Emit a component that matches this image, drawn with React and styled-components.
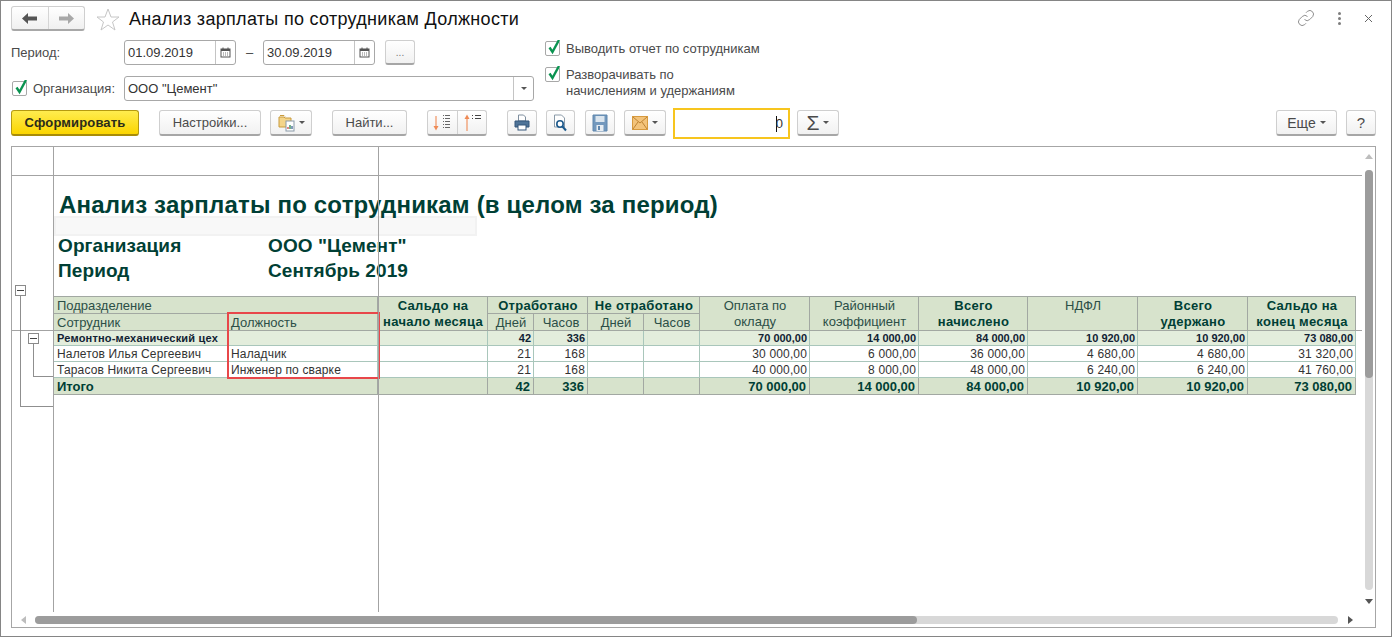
import React from "react";
import styled, { createGlobalStyle } from "styled-components";

const totalRow = ["42", "336", "", "", "70 000,00", "14 000,00", "84 000,00", "10 920,00", "10 920,00", "73 080,00"];
const people = [
  { name: "Налетов Илья Сергеевич", job: "Наладчик", cells: ["21", "168", "", "", "30 000,00", "6 000,00", "36 000,00", "4 680,00", "4 680,00", "31 320,00"] },
  { name: "Тарасов Никита Сергеевич", job: "Инженер по сварке", cells: ["21", "168", "", "", "40 000,00", "8 000,00", "48 000,00", "6 240,00", "6 240,00", "41 760,00"] },
];
const colWidths = [174, 150, 110, 46, 54, 56, 56, 110, 109, 109, 110, 110, 108];

const Calendar = () => (
  <svg width="11" height="11" viewBox="0 0 11 11">
    <rect x="1" y="2" width="9" height="8" fill="#fff" stroke="#555" />
    <rect x="1" y="2" width="9" height="2" fill="#555" />
    <path d="M3 0.5v2M8 0.5v2" stroke="#555" />
    <path d="M3 6h1M5 6h1M7 6h1M3 8h1M5 8h1M7 8h1" stroke="#777" />
  </svg>
);

const Check = () => (
  <svg width="15" height="15" viewBox="0 0 15 15">
    <path d="M3.500 7.500l3 4.500 6.500-12" fill="none" stroke="#0a9350" strokeWidth="2.4" />
  </svg>
);

const Caret = () => <CaretMark />;

const FolderIcon = () => (
  <svg width="17" height="18" viewBox="0 0 17 18">
    <path d="M1 3h5l1 1h6v9H1z" fill="#f4d58a" stroke="#c99b3c" />
    <path d="M2 1.500h4l1 1" fill="none" stroke="#c99b3c" />
    <rect x="8" y="7" width="8" height="10" fill="#fff" stroke="#8a9aa8" />
    <path d="M10 15v-2" stroke="#d9534f" strokeWidth="1.4" />
    <path d="M12 15v-4" stroke="#3c8f5a" strokeWidth="1.4" />
    <path d="M14 15v-3" stroke="#4a6f9c" strokeWidth="1.4" />
  </svg>
);

const SortDown = () => (
  <svg width="20" height="20" viewBox="0 0 20 20">
    <path d="M4 3v12" stroke="#ef8a55" strokeWidth="1.1" />
    <path d="M1.500 13L4 17.500 6.500 13z" fill="#ef8a55" />
    <path d="M11 2.500h1M13 2.500h5M11 5.500h1M13 5.500h5M11 8.500h1M13 8.500h5M11 11.500h1M13 11.500h5M11 14.500h1M13 14.500h5" stroke="#666" />
  </svg>
);

const SortUp = () => (
  <svg width="20" height="20" viewBox="0 0 20 20">
    <path d="M5 5v13" stroke="#ef8a55" strokeWidth="1.1" />
    <path d="M2.500 6L5 1.500 7.500 6z" fill="#ef8a55" />
    <path d="M10 2.500h1M13 2.500h6M10 5.500h1M13 5.500h6" stroke="#444" />
  </svg>
);

const PrintIcon = () => (
  <svg width="16" height="17" viewBox="0 0 16 17">
    <path d="M4.500 1h5l2 2v4h-7z" fill="#fff" stroke="#7e8e9e" />
    <path d="M1 7h14v6H1z" fill="#4f7498" stroke="#34567a" />
    <rect x="4" y="11" width="8" height="5" fill="#fff" stroke="#34567a" />
  </svg>
);

const PreviewIcon = () => (
  <svg width="15" height="18" viewBox="0 0 15 18">
    <path d="M1.500 1h7l3 3v9h-10z" fill="#fff" stroke="#8a9aa8" />
    <circle cx="7" cy="10" r="3.2" fill="#fff" stroke="#1d5a8c" strokeWidth="1.6" />
    <path d="M9.500 12.500l3.500 4" stroke="#1d5a8c" strokeWidth="2" />
  </svg>
);

const SaveIcon = () => (
  <svg width="16" height="18" viewBox="0 0 16 18">
    <path d="M1 1h14v16H1z" fill="#7398bd" stroke="#5f86ad" />
    <rect x="3.500" y="2" width="9" height="6" fill="#dbe5ee" />
    <rect x="4.500" y="11" width="7" height="6" fill="#e8edf2" />
    <rect x="6" y="12" width="2" height="4" fill="#5f86ad" />
  </svg>
);

const MailIcon = () => (
  <svg width="16" height="14" viewBox="0 0 16 14">
    <rect x="0.500" y="0.500" width="15" height="13" fill="#f3c37a" stroke="#d79a3e" />
    <path d="M1 1l7 6 7-6M1 13l5-7M15 13l-5-7" fill="none" stroke="#bf8433" />
  </svg>
);

const LinkIcon = () => (
  <svg width="18" height="18" viewBox="0 0 24 24" fill="none" stroke="#8d8d8d" strokeWidth="1.300">
    <path d="M10 14a5 5 0 0 0 7 0l4-4a5 5 0 0 0-7-7l-2 2" />
    <path d="M14 10a5 5 0 0 0-7 0l-4 4a5 5 0 0 0 7 7l2-2" />
  </svg>
);

const App = () => {
  return (
    <>
      <GlobalStyle />
      <Window>
        <Header>
          <NavGroup>
            <NavButton>
              <svg width="15" height="11" viewBox="0 0 15 11"><path d="M0 5.500L6 0v3.500h9v4H6V11z" fill="#555" /></svg>
            </NavButton>
            <NavButton $last>
              <svg width="15" height="11" viewBox="0 0 15 11"><path d="M15 5.500L9 0v3.500H0v4h9V11z" fill="#a8a8a8" /></svg>
            </NavButton>
          </NavGroup>
          <StarWrap>
            <svg width="24" height="23" viewBox="0 0 24 23">
              <path d="M12 1l3 8h8l-6.500 5 2.500 8-7-5-7 5 2.500-8L1 9h8z" fill="#fff" stroke="#c6c6c6" />
            </svg>
          </StarWrap>
          <Title>Анализ зарплаты по сотрудникам Должности</Title>
          <HeaderTools>
            <LinkIcon />
            <Dots><i /><i /><i /></Dots>
            <svg width="9" height="9" viewBox="0 0 9 9"><path d="M1 1l7 7M8 1L1 8" stroke="#666" /></svg>
          </HeaderTools>
        </Header>

        <Form>
          <Params>
            <ParamRow>
              <FieldLabel>Период:</FieldLabel>
              <Field $width={112}>
                <FieldText>01.09.2019</FieldText>
                <FieldAddon><Calendar /></FieldAddon>
              </Field>
              <Dash>–</Dash>
              <Field $width={112}>
                <FieldText>30.09.2019</FieldText>
                <FieldAddon><Calendar /></FieldAddon>
              </Field>
              <Button $ml={10} $width={30} $height={25}><Dim>...</Dim></Button>
            </ParamRow>
            <ParamRow $gap>
              <OrgLabel>
                <CheckBox><Check /></CheckBox>
                <span>Организация:</span>
              </OrgLabel>
              <Field $width={410}>
                <FieldText>ООО "Цемент"</FieldText>
                <FieldAddon><Caret /></FieldAddon>
              </Field>
            </ParamRow>
          </Params>
          <Options>
            <Option>
              <CheckBox><Check /></CheckBox>
              <OptionText>Выводить отчет по сотрудникам</OptionText>
            </Option>
            <Option $second>
              <CheckBox><Check /></CheckBox>
              <OptionText>Разворачивать по<br />начислениям и удержаниям</OptionText>
            </Option>
          </Options>
        </Form>

        <Toolbar>
          <PrimaryButton>Сформировать</PrimaryButton>
          <Button $ml={20} $width={102}>Настройки...</Button>
          <Button $ml={9} $width={42}><FolderIcon /><Caret /></Button>
          <Button $ml={20} $width={75}>Найти...</Button>
          <SplitGroup>
            <SplitButton><SortDown /></SplitButton>
            <SplitButton $last><SortUp /></SplitButton>
          </SplitGroup>
          <Button $ml={20} $width={30}><PrintIcon /></Button>
          <Button $ml={9} $width={29}><PreviewIcon /></Button>
          <Button $ml={10} $width={30}><SaveIcon /></Button>
          <Button $ml={9} $width={42}><MailIcon /><Caret /></Button>
          <SumInput><Cursor /><SumZero>0</SumZero></SumInput>
          <Button $ml={7} $width={42}><Sigma>Σ</Sigma><Caret /></Button>
          <Spacer />
          <Button $width={61} $size={14}>Еще<Caret /></Button>
          <Button $ml={9} $width={30} $size={15}>?</Button>
        </Toolbar>

        <Report>
          <ReportMain>
            <Canvas>
              <HLine $top={183} />
              <VLine $left={41} />
              <VLine $left={366} />
              <TopStrip />
              <Body>
                <Gutter>
                  <GroupBox $left={3} $top={109}><Minus /></GroupBox>
                  <Bracket $left={8} $top={120} $width={33} $height={111} />
                  <GroupBox $left={16} $top={157}><Minus /></GroupBox>
                  <Bracket $left={21} $top={168} $width={20} $height={33} />
                </Gutter>
                <Sheet>
                  <ReportTitle>Анализ зарплаты по сотрудникам (в целом за период)</ReportTitle>
                  <GhostCell />
                  <InfoRow>
                    <InfoLabel>Организация</InfoLabel>
                    <span>ООО "Цемент"</span>
                  </InfoRow>
                  <InfoRow $second>
                    <InfoLabel>Период</InfoLabel>
                    <span>Сентябрь 2019</span>
                  </InfoRow>
                  <TableWrap>
                    <ReportTable>
                      <colgroup>
                        {colWidths.map((w, i) => <col key={i} style={{ width: w }} />)}
                      </colgroup>
                      <thead>
                        <tr>
                          <HeadCell colSpan={2} $left>Подразделение</HeadCell>
                          <HeadCell rowSpan={2} $bold $multi>Сальдо на<br />начало месяца</HeadCell>
                          <HeadCell colSpan={2} $bold>Отработано</HeadCell>
                          <HeadCell colSpan={2} $bold>Не отработано</HeadCell>
                          <HeadCell rowSpan={2} $multi>Оплата по<br />окладу</HeadCell>
                          <HeadCell rowSpan={2} $multi>Районный<br />коэффициент</HeadCell>
                          <HeadCell rowSpan={2} $bold $multi>Всего<br />начислено</HeadCell>
                          <HeadCell rowSpan={2} $top>НДФЛ</HeadCell>
                          <HeadCell rowSpan={2} $bold $multi>Всего<br />удержано</HeadCell>
                          <HeadCell rowSpan={2} $bold $multi>Сальдо на<br />конец месяца</HeadCell>
                        </tr>
                        <tr>
                          <HeadCell $left>Сотрудник</HeadCell>
                          <HeadCell $left>Должность</HeadCell>
                          <HeadCell>Дней</HeadCell>
                          <HeadCell>Часов</HeadCell>
                          <HeadCell>Дней</HeadCell>
                          <HeadCell>Часов</HeadCell>
                        </tr>
                      </thead>
                      <tbody>
                        <SubRow>
                          <SubCell colSpan={2} $left>Ремонтно-механический цех</SubCell>
                          <SubCell />
                          {totalRow.map((v, i) => <SubCell key={i}>{v}</SubCell>)}
                        </SubRow>
                        {people.map((p) => (
                          <PersonRow key={p.name}>
                            <DataCell $left>{p.name}</DataCell>
                            <DataCell $left>{p.job}</DataCell>
                            <DataCell />
                            {p.cells.map((v, i) => <DataCell key={i}>{v}</DataCell>)}
                          </PersonRow>
                        ))}
                        <TotalRow>
                          <TotalCell colSpan={2} $left>Итого</TotalCell>
                          <TotalCell />
                          {totalRow.map((v, i) => <TotalCell key={i}>{v}</TotalCell>)}
                        </TotalRow>
                      </tbody>
                    </ReportTable>
                    <Highlight />
                  </TableWrap>
                </Sheet>
              </Body>
            </Canvas>
            <VBar>
              <ArrowUp />
              <VTrack>
                <VThumb />
              </VTrack>
              <ArrowDown />
            </VBar>
          </ReportMain>
          <HBar>
            <ArrowLeft />
            <HTrack>
              <HThumb />
            </HTrack>
            <ArrowRight />
          </HBar>
        </Report>
      </Window>
    </>
  );
};

export default App;

const GlobalStyle = createGlobalStyle`
  * { box-sizing: border-box; }
  html, body { margin: 0; padding: 0; background: #fff; }
  body { font-family: "Liberation Sans", Arial, sans-serif; overflow: hidden; }
`;

const Window = styled.div`
  width: 1392px;
  height: 637px;
  border: 1px solid #858585;
  background: #fff;
  overflow: hidden;
`;

const Header = styled.div`
  display: flex;
  align-items: flex-start;
  height: 39px;
  padding: 5px 0 0 10px;
`;

const NavGroup = styled.div`
  display: flex;
  width: 74px;
  height: 25px;
  border: 1px solid #cfcfcf;
  border-bottom: 2px solid #a8a8a8;
  border-radius: 3px;
  background: linear-gradient(#fff, #f0f0f0);
`;

const NavButton = styled.div`
  flex: 1;
  display: flex;
  align-items: center;
  justify-content: center;
  border-left: ${(props) => (props.$last ? "1px solid #d5d5d5" : "none")};
`;

const StarWrap = styled.div`
  width: 24px;
  margin: 2px 0 0 11px;
`;

const Title = styled.div`
  margin: 3px 0 0 9px;
  font-size: 18px;
  line-height: 21px;
  color: #111;
  letter-spacing: 0.3px;
`;

const HeaderTools = styled.div`
  margin-left: auto;
  display: flex;
  align-items: center;
  gap: 23px;
  height: 24px;
  padding-right: 18px;
`;

const Dots = styled.div`
  display: flex;
  flex-direction: column;
  gap: 2px;

  i {
    width: 3px;
    height: 3px;
    border-radius: 50%;
    background: #7d7d7d;
  }
`;

const Form = styled.div`
  display: flex;
  height: 60px;
  padding-left: 10px;
`;

const Params = styled.div`
  width: 523px;
`;

const ParamRow = styled.div`
  display: flex;
  align-items: center;
  height: 25px;
  margin-top: ${(props) => (props.$gap ? "11px" : "0")};
`;

const FieldLabel = styled.div`
  width: 113px;
  font-size: 13px;
  color: #4a4a4a;
`;

const OrgLabel = styled.div`
  display: flex;
  align-items: center;
  gap: 6px;
  width: 113px;
  padding-left: 1px;
  font-size: 13px;
  color: #4a4a4a;
  white-space: nowrap;
`;

const Field = styled.div`
  display: flex;
  width: ${(props) => props.$width}px;
  height: 25px;
  border: 1px solid #a8a8a8;
  border-radius: 3px;
  background: #fff;
`;

const FieldText = styled.div`
  flex: 1;
  padding-left: 3px;
  font-size: 13px;
  line-height: 23px;
  color: #333;
`;

const FieldAddon = styled.div`
  width: 20px;
  display: flex;
  align-items: center;
  justify-content: center;
  border-left: 1px solid #c4c4c4;
`;

const Dash = styled.div`
  width: 27px;
  text-align: center;
  font-size: 13px;
  color: #444;
`;

const CheckBox = styled.div`
  position: relative;
  flex: none;
  width: 15px;
  height: 15px;
  border: 1px solid #a8a8a8;
  border-radius: 2px;
  background: #fff;

  svg {
    position: absolute;
    left: 0;
    top: -2px;
  }
`;

const Options = styled.div`
  margin-left: 11px;
  padding-top: 1px;
`;

const Option = styled.div`
  display: flex;
  gap: 6px;
  margin-top: ${(props) => (props.$second ? "10px" : "0")};
`;

const OptionText = styled.div`
  font-size: 13px;
  line-height: 16px;
  color: #4a4a4a;
`;

const Toolbar = styled.div`
  display: flex;
  align-items: flex-start;
  height: 26px;
  margin-top: 10px;
  padding: 0 15px 0 10px;
`;

const Button = styled.div`
  flex: none;
  display: flex;
  align-items: center;
  justify-content: center;
  gap: 4px;
  width: ${(props) => props.$width}px;
  height: ${(props) => props.$height || 26}px;
  margin-left: ${(props) => props.$ml || 0}px;
  border: 1px solid #cfcfcf;
  border-bottom: 2px solid #a6a6a6;
  border-radius: 3px;
  background: linear-gradient(#fff, #f1f1f1);
  font-size: ${(props) => props.$size || 13}px;
  color: #4a4a4a;
`;

const Dim = styled.span`
  font-size: 10px;
  color: #777;
`;

const PrimaryButton = styled.div`
  flex: none;
  display: flex;
  align-items: center;
  justify-content: center;
  width: 128px;
  height: 26px;
  border: 1px solid #b59a10;
  border-bottom: 2px solid #a88c08;
  border-radius: 3px;
  background: linear-gradient(#ffec4f, #fbd500);
  font-size: 13px;
  font-weight: bold;
  letter-spacing: 0.15px;
  color: #2b2b1a;
`;

const SplitGroup = styled.div`
  flex: none;
  display: flex;
  width: 60px;
  height: 26px;
  margin-left: 20px;
  border: 1px solid #cfcfcf;
  border-bottom: 2px solid #a6a6a6;
  border-radius: 3px;
  background: linear-gradient(#fff, #f1f1f1);
`;

const SplitButton = styled.div`
  flex: 1;
  display: flex;
  align-items: center;
  justify-content: center;
  border-left: ${(props) => (props.$last ? "1px solid #d0d0d0" : "none")};
`;

const SumInput = styled.div`
  flex: none;
  display: flex;
  align-items: center;
  justify-content: flex-end;
  width: 117px;
  height: 31px;
  margin: -2px 0 0 7px;
  padding-right: 5px;
  border: 2px solid #f7c51e;
  font-size: 13px;
  color: #333;
`;

const Cursor = styled.span`
  width: 1px;
  height: 16px;
  background: #111;
`;

const SumZero = styled.span`
  margin-left: -1px;
`;

const Sigma = styled.span`
  font-size: 21px;
  line-height: 22px;
  color: #4a4a4a;
`;

const CaretMark = styled.span`
  flex: none;
  width: 0;
  height: 0;
  border-left: 3px solid transparent;
  border-right: 3px solid transparent;
  border-top: 3px solid #555;
`;

const Spacer = styled.div`
  flex: 1;
`;

const Report = styled.div`
  width: 1365px;
  height: 482px;
  margin: 10px 0 0 10px;
  border: 1px solid #a6a6a6;
  display: flex;
  flex-direction: column;
`;

const ReportMain = styled.div`
  display: flex;
  height: 465px;
`;

const Canvas = styled.div`
  position: relative;
  width: 1350px;
  overflow: hidden;
`;

const HLine = styled.div`
  position: absolute;
  left: 0;
  right: 0;
  top: ${(props) => props.$top}px;
  height: 1px;
  background: #a3a3a3;
`;

const VLine = styled.div`
  position: absolute;
  z-index: 2;
  left: ${(props) => props.$left}px;
  top: 0;
  bottom: 0;
  width: 1px;
  background: #a3a3a3;
`;

const TopStrip = styled.div`
  height: 29px;
  border-bottom: 1px solid #a3a3a3;
`;

const Body = styled.div`
  display: flex;
`;

const Gutter = styled.div`
  position: relative;
  flex: none;
  width: 42px;
`;

const GroupBox = styled.div`
  position: absolute;
  z-index: 1;
  left: ${(props) => props.$left}px;
  top: ${(props) => props.$top}px;
  width: 11px;
  height: 11px;
  border: 1px solid #8a8a8a;
  background: #fff;
`;

const Minus = styled.div`
  width: 7px;
  height: 1px;
  margin: 4px 0 0 1px;
  background: #444;
`;

const Bracket = styled.div`
  position: absolute;
  left: ${(props) => props.$left}px;
  top: ${(props) => props.$top}px;
  width: ${(props) => props.$width}px;
  height: ${(props) => props.$height}px;
  border-left: 1px solid #8f8f8f;
  border-bottom: 1px solid #8f8f8f;
`;

const Sheet = styled.div`
  position: relative;
  flex: 1;
  padding-top: 14px;
`;

const ReportTitle = styled.div`
  margin-left: 5px;
  font-size: 24px;
  line-height: 29px;
  font-weight: bold;
  color: #003f35;
  letter-spacing: 0.19px;
  white-space: nowrap;
`;

const GhostCell = styled.div`
  width: 423px;
  height: 20px;
  margin-top: -3px;
  background: #f8f8f8;
  border: 2px solid #f2f2f2;
`;

const InfoRow = styled.div`
  display: flex;
  margin: ${(props) => (props.$second ? "1px" : "-2px")} 0 0 4px;
  font-size: 19px;
  line-height: 24px;
  font-weight: bold;
  letter-spacing: 0.1px;
  color: #003f35;
`;

const InfoLabel = styled.span`
  width: 210px;
`;

const TableWrap = styled.div`
  position: relative;
  z-index: 1;
  width: 1303px;
  margin: 13px 0 0 -1px;
`;

const ReportTable = styled.table`
  width: 1302px;
  table-layout: fixed;
  border-collapse: collapse;
  font-size: 12px;
`;

const HeadCell = styled.th`
  height: 17px;
  padding: ${(props) => (props.$multi ? "0" : "1px")} 2px 0 3px;
  border: 1px solid #a2a8a2;
  background: #d7e3cc;
  line-height: ${(props) => (props.$multi ? "16px" : "15px")};
  overflow: hidden;
  white-space: nowrap;
  text-align: ${(props) => (props.$left ? "left" : "center")};
  vertical-align: ${(props) => (props.$top ? "top" : "middle")};
  font-size: 13px;
  font-weight: ${(props) => (props.$bold ? "bold" : "normal")};
  letter-spacing: ${(props) => (props.$bold ? "0.3px" : "0")};
  color: ${(props) => (props.$bold ? "#003f35" : "#2c4f47")};
`;

const SubRow = styled.tr`
  height: 15px;
`;

const SubCell = styled.td`
  padding: 0 2px 0 3px;
  border: 1px solid #a9c6bb;
  background: #e3eddc;
  font-size: 11px;
  line-height: 13px;
  font-weight: bold;
  color: #123;
  white-space: nowrap;
  overflow: hidden;
  letter-spacing: ${(props) => (props.$left ? "0.2px" : "0")};
  text-align: ${(props) => (props.$left ? "left" : "right")};
`;

const PersonRow = styled.tr`
  height: 16px;
`;

const DataCell = styled.td`
  padding: 0 2px 0 3px;
  border: 1px solid #a9c6bb;
  background: #fff;
  line-height: 14px;
  color: #333;
  white-space: nowrap;
  overflow: hidden;
  letter-spacing: 0.15px;
  text-align: ${(props) => (props.$left ? "left" : "right")};
`;

const TotalRow = styled.tr`
  height: 17px;
`;

const TotalCell = styled.td`
  padding: 0 3px;
  border: 1px solid #a2a8a2;
  background: #d7e3cc;
  font-size: 13px;
  line-height: 15px;
  font-weight: bold;
  color: #003f35;
  white-space: nowrap;
  overflow: hidden;
  text-align: ${(props) => (props.$left ? "left" : "right")};
`;

const Highlight = styled.div`
  position: absolute;
  left: 174px;
  top: 16px;
  width: 153px;
  height: 67px;
  border: 2px solid #e8474a;
  pointer-events: none;
`;

const VBar = styled.div`
  position: relative;
  width: 13px;
  display: flex;
  flex-direction: column;
  align-items: center;
  padding-top: 7px;
`;

const VTrack = styled.div`
  width: 8px;
  height: 420px;
  margin-top: 11px;
  border-radius: 4px;
  background: #d8d8d8;
`;

const VThumb = styled.div`
  height: 208px;
  border-radius: 4px;
  background: #9c9c9c;
`;

const ArrowUp = styled.div`
  width: 0;
  height: 0;
  border-left: 4px solid transparent;
  border-right: 4px solid transparent;
  border-bottom: 5px solid #bdbdbd;
`;

const ArrowDown = styled.div`
  width: 0;
  height: 0;
  margin-top: 9px;
  border-left: 4px solid transparent;
  border-right: 4px solid transparent;
  border-top: 5px solid #555;
`;

const HBar = styled.div`
  display: flex;
  align-items: center;
  height: 15px;
  padding: 1px 0 0 9px;
`;

const ArrowLeft = styled.div`
  width: 0;
  height: 0;
  border-top: 4px solid transparent;
  border-bottom: 4px solid transparent;
  border-right: 5px solid #bdbdbd;
`;

const ArrowRight = styled.div`
  width: 0;
  height: 0;
  margin-left: 10px;
  border-top: 4px solid transparent;
  border-bottom: 4px solid transparent;
  border-left: 5px solid #555;
`;

const HTrack = styled.div`
  width: 1303px;
  height: 8px;
  margin-left: 9px;
  border-radius: 4px;
  background: #d8d8d8;
`;

const HThumb = styled.div`
  width: 882px;
  height: 8px;
  border-radius: 4px;
  background: #9c9c9c;
`;
